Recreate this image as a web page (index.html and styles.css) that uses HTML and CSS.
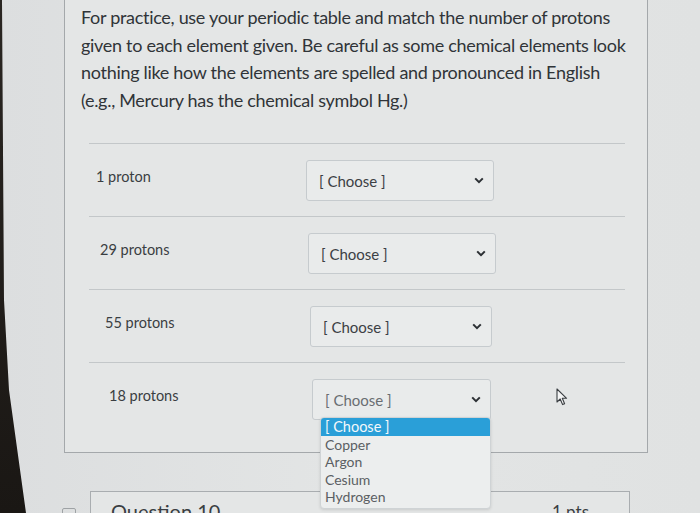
FILE: index.html
```html
<!DOCTYPE html>
<html lang="en">
<head>
<meta charset="utf-8">
<title>Matching question</title>
<link rel="stylesheet" href="styles.css">
</head>
<body>
<div class="page">
  <div class="card">
    <p class="prompt">For practice, use your periodic table and match the number of protons given to each element given. Be careful as some chemical elements look nothing like how the elements are spelled and pronounced in English (e.g., Mercury has the chemical symbol Hg.)</p>
    <div class="answers">
      <div class="row r1">
        <div class="label">1 proton</div>
        <div class="select"><span>[ Choose ]</span><svg class="chev" viewBox="0 0 10 7" width="10" height="7"><path d="M1.2 1.4 L5 5.2 L8.8 1.4" fill="none" stroke="#2c3034" stroke-width="2"/></svg></div>
      </div>
      <div class="row r2">
        <div class="label">29 protons</div>
        <div class="select"><span>[ Choose ]</span><svg class="chev" viewBox="0 0 10 7" width="10" height="7"><path d="M1.2 1.4 L5 5.2 L8.8 1.4" fill="none" stroke="#2c3034" stroke-width="2"/></svg></div>
      </div>
      <div class="row r3">
        <div class="label">55 protons</div>
        <div class="select"><span>[ Choose ]</span><svg class="chev" viewBox="0 0 10 7" width="10" height="7"><path d="M1.2 1.4 L5 5.2 L8.8 1.4" fill="none" stroke="#2c3034" stroke-width="2"/></svg></div>
      </div>
      <div class="row r4 last">
        <div class="label">18 protons</div>
        <div class="select open"><span class="faint">[ Choose ]</span><svg class="chev" viewBox="0 0 10 7" width="10" height="7"><path d="M1.2 1.4 L5 5.2 L8.8 1.4" fill="none" stroke="#2c3034" stroke-width="2"/></svg>
          <ul class="menu">
            <li class="hl">[ Choose ]</li>
            <li>Copper</li>
            <li>Argon</li>
            <li>Cesium</li>
            <li>Hydrogen</li>
          </ul>
        </div>
        <svg class="cursor" viewBox="0 0 12 18" width="12" height="18"><path d="M1 1 L1 14 L4.2 11 L6.6 16.6 L8.6 15.7 L6.3 10.3 L10.6 10.3 Z" fill="#f4f5f5" stroke="#3a3e42" stroke-width="1.1" stroke-linejoin="round"/></svg>
      </div>
    </div>
  </div>
  <div class="next">
    <span class="flag"></span>
    <div class="card2">
      <span class="qtitle">Question 10</span>
      <span class="pts">1 pts</span>
    </div>
  </div>
  <div class="bezel"></div>
</div>
</body>
</html>
```
FILE: styles.css
```css
html, body {
  margin: 0;
  padding: 0;
}
body {
  background: #dfe1e1;
  font-family: Lato, "Noto Sans", sans-serif;
  color: #383c40;
  width: 700px;
  height: 513px;
  overflow: hidden;
}
.page {
  position: relative;
  width: 700px;
  height: 513px;
  overflow: hidden;
  background: linear-gradient(90deg, #dcdedf 0%, #e3e5e5 50%, #e0e2e2 100%);
}
.card {
  margin-left: 64px;
  margin-top: -12px;
  width: 584px;
  height: 465px;
  box-sizing: border-box;
  border: 1px solid #a4a8ab;
  border-top: none;
  background: #e4e6e6;
  padding-top: 16px;
}
.prompt {
  margin: 0;
  padding: 0 16px 0 16px;
  font-size: 18px;
  line-height: 27.5px;
  letter-spacing: -0.3px;
  color: #303438;
}
.answers {
  margin: 29px 22px 0 24px;
  border-top: 1px solid #c3c7c9;
}
.row {
  position: relative;
  display: flex;
  align-items: flex-start;
  padding: 16px 0 15px 0;
  border-bottom: 1px solid #c3c7c9;
}
.row.last {
  border-bottom: none;
}
.label {
  width: 217px;
  box-sizing: border-box;
  padding-left: 7px;
  padding-top: 8px;
  font-size: 14.5px;
  line-height: 18px;
  color: #3a3e42;
}
.r2 .label { padding-left: 11px; }
.r3 .label { padding-left: 16px; }
.r4 .label { padding-left: 20px; }
.r2 .select { margin-left: 2px; }
.r3 .select { margin-left: 4px; width: 182px; }
.r4 .select { margin-left: 6px; width: 179px; }
.select {
  position: relative;
  width: 188px;
  height: 41px;
  box-sizing: border-box;
  border: 1px solid #c6cbce;
  border-radius: 3px;
  background: #e9ebeb;
  display: flex;
  align-items: center;
  justify-content: space-between;
  padding: 0 9px 0 12px;
  font-size: 15px;
  color: #3c4044;
}
.select .faint {
  color: #6a6e72;
}
.chev {
  display: block;
}
.menu {
  position: absolute;
  left: 7px;
  top: 37px;
  width: 169px;
  margin: 0;
  padding: 0 0 2px 0;
  list-style: none;
  background: #eceeee;
  border: 1px solid #cfd3d5;
  border-radius: 4px;
  box-shadow: 0 1px 3px rgba(0,0,0,0.12);
  z-index: 2;
}
.menu li {
  height: 17.5px;
  line-height: 17.5px;
  padding-left: 4px;
  font-size: 14px;
  color: #5b5f63;
}
.menu li.hl {
  background: #2a9fd8;
  color: #f4f8fb;
  border-radius: 3px 3px 0 0;
  font-size: 14.5px;
}
.cursor {
  position: absolute;
  left: 467px;
  top: 25px;
}
.next {
  display: flex;
  align-items: flex-start;
  margin-top: 38px;
  position: relative;
}
.flag {
  width: 12px;
  height: 12px;
  margin: 17px 0 0 62px;
  border: 1px solid #9ea2a5;
  border-radius: 2px;
}
.card2 {
  margin-left: 14px;
  width: 540px;
  height: 60px;
  box-sizing: border-box;
  border: 1px solid #a9adb0;
  background: #e4e6e6;
  display: flex;
  justify-content: space-between;
  padding: 7px 40px 0 20px;
}
.qtitle {
  font-size: 20px;
  color: #3a3e42;
}
.pts {
  font-size: 17px;
  color: #3a3e42;
  padding-top: 2px;
}
.bezel {
  position: absolute;
  left: 0;
  top: 0;
  width: 30px;
  height: 513px;
  background: linear-gradient(180deg, #2a2622 0%, #1a1714 100%);
  clip-path: polygon(0 0, 2px 0, 4px 300px, 9px 390px, 26px 513px, 0 513px);
}
```
